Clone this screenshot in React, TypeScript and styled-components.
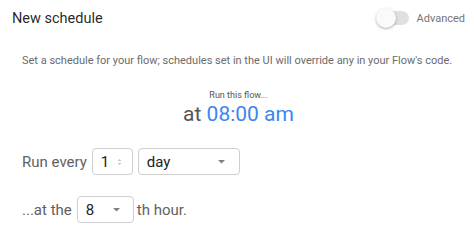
import React from "react";
import styled, { createGlobalStyle } from "styled-components";

const Global = createGlobalStyle`
  html, body { margin: 0; padding: 0; background: #fff; }
  body { font-family: Roboto, "Liberation Sans", sans-serif; }
`;

const Page = styled.div`
  width: 474px;
  height: 242px;
  box-sizing: border-box;
  padding: 6px 9px 0 12px;
  display: flex;
  flex-direction: column;
`;

const Header = styled.div`
  display: flex;
  align-items: center;
  justify-content: space-between;
  height: 24px;
`;

const Title = styled.div`
  font-size: 14.5px;
  color: rgba(0, 0, 0, 0.87);
`;

const ToggleWrap = styled.div`
  display: flex;
  align-items: center;
  gap: 8px;
`;

const Track = styled.div`
  position: relative;
  width: 32px;
  height: 14px;
  border-radius: 7px;
  background: #e0e0e0;
`;

const Thumb = styled.div`
  position: absolute;
  left: -1px;
  top: -3px;
  width: 20px;
  height: 20px;
  border-radius: 50%;
  background: #fafafa;
  box-shadow: 0 1px 3px rgba(0, 0, 0, 0.25), 0 1px 1px rgba(0, 0, 0, 0.1);
`;

const ToggleLabel = styled.span`
  font-size: 11px;
  color: #757575;
`;

const Description = styled.p`
  margin: 24px 0 0 10px;
  font-size: 11px;
  color: #6b6b6b;
`;

const Center = styled.div`
  display: flex;
  flex-direction: column;
  align-items: center;
  margin-top: 23px;
`;

const Small = styled.div`
  font-size: 9px;
  color: #555;
`;

const Big = styled.div`
  font-size: 21px;
  color: #555;
  line-height: 28px;
`;

const Blue = styled.span`
  color: #3b86f0;
`;

const Row = styled.div<{ $top: number }>`
  display: flex;
  align-items: center;
  gap: 5px;
  margin: ${(p) => p.$top}px 0 0 10px;
  font-size: 15px;
  color: #616161;
`;

const Label = styled.span<{ $shift?: number }>`
  margin-left: ${(p) => p.$shift ?? 0}px;
`;

const Box = styled.div<{ $w: number; $pr: number }>`
  box-sizing: border-box;
  width: ${(p) => p.$w}px;
  height: 27px;
  border: 1px solid #cfcfcf;
  border-radius: 4px;
  display: flex;
  align-items: center;
  justify-content: space-between;
  padding: 0 ${(p) => p.$pr}px 0 8px;
  color: #222;
  font-size: 15px;
`;

const Caret = () => (
  <svg width="7" height="4" viewBox="0 0 7 4">
    <path d="M0 0 L7 0 L3.5 3.5 Z" fill="#808080" />
  </svg>
);

const Spinner = () => (
  <svg width="5" height="8" viewBox="0 0 5 8">
    <path d="M0.5 3 L2.5 1 L4.5 3 Z" fill="#c4c4c4" />
    <path d="M0.5 5 L2.5 7 L4.5 5 Z" fill="#c4c4c4" />
  </svg>
);

export default function App() {
  return (
    <>
      <Global />
      <Page>
        <Header>
          <Title>New schedule</Title>
          <ToggleWrap>
            <Track>
              <Thumb />
            </Track>
            <ToggleLabel>Advanced</ToggleLabel>
          </ToggleWrap>
        </Header>
        <Description>
          Set a schedule for your flow; schedules set in the UI will override any in your Flow's code.
        </Description>
        <Center>
          <Small>Run this flow...</Small>
          <Big>
            at <Blue>08:00 am</Blue>
          </Big>
        </Center>
        <Row $top={20}>
          <Label>Run every</Label>
          <Box $w={41} $pr={10}>
            <span>1</span>
            <Spinner />
          </Box>
          <Box $w={102} $pr={14}>
            <span>day</span>
            <Caret />
          </Box>
        </Row>
        <Row $top={21}>
          <Label>...at the</Label>
          <Box $w={57} $pr={13}>
            <span>8</span>
            <Caret />
          </Box>
          <Label $shift={-2}>th hour.</Label>
        </Row>
      </Page>
    </>
  );
}
